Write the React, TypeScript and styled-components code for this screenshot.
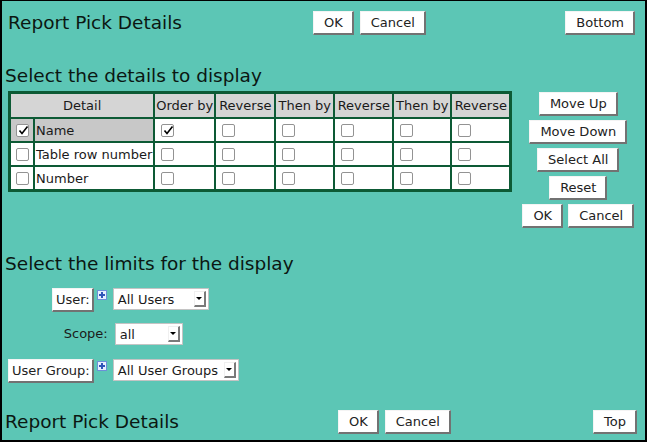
import React from 'react';
import styled, { createGlobalStyle } from 'styled-components';

const GlobalStyle = createGlobalStyle`
  html, body {
    margin: 0;
    padding: 0;
    background: #5cc6b5;
  }
  body {
    font-family: "DejaVu Sans", Verdana, sans-serif;
    color: #000;
  }
`;

const Frame = styled.div`
  box-sizing: border-box;
  width: 647px;
  height: 442px;
  border-style: solid;
  border-color: #000;
  border-width: 1px 2px 2px 2px;
  background: #5cc6b5;
  display: flex;
  flex-direction: column;
  overflow: hidden;
`;

const Bar = styled.div<{ $top?: boolean }>`
  display: flex;
  align-items: center;
  height: 25px;
  margin-top: ${({ $top }) => ($top ? '9px' : 'auto')};
  margin-bottom: ${({ $top }) => ($top ? '0' : '6px')};
  padding-left: ${({ $top }) => ($top ? '6px' : '3px')};
  padding-right: ${({ $top }) => ($top ? '10px' : '8px')};
`;

const Title = styled.div<{ $width: number }>`
  width: ${({ $width }) => $width}px;
  font-size: 18.5px;
  line-height: 22px;
  color: #0b1712;
`;

const Spacer = styled.div`
  flex: 1;
`;

const Button = styled.button<{ $tight?: boolean }>`
  box-sizing: border-box;
  height: 24px;
  margin: 0;
  padding: ${({ $tight }) => ($tight ? '0 2px 0 3px' : '0 9px 0 10px')};
  font-family: "DejaVu Sans", Verdana, sans-serif;
  font-size: 13px;
  color: #222;
  background: #fff;
  border-style: solid;
  border-width: 1px 2px 2px 1px;
  border-color: #f4f4f4 #727272 #727272 #f4f4f4;
  cursor: pointer;
  white-space: nowrap;
`;

const Gap = styled.span<{ $w: number }>`
  display: inline-block;
  width: ${({ $w }) => $w}px;
`;

const Heading = styled.h2<{ $gap: number }>`
  margin: ${({ $gap }) => $gap}px 0 0;
  padding-left: 3px;
  font-size: 18.5px;
  font-weight: normal;
  line-height: 22px;
  color: #0b1712;
`;

const DetailsRow = styled.div`
  display: flex;
  align-items: flex-start;
  padding-left: 6px;
  margin-top: 4px;
`;

const Table = styled.table`
  border-collapse: separate;
  border-spacing: 2px;
  border: 1px solid #0d5a35;
  background: #0d5a35;
  font-size: 13px;
  color: #1a1a1a;
`;

const Th = styled.th<{ $w?: number }>`
  box-sizing: border-box;
  background: #d5d5d5;
  font-weight: normal;
  height: 23px;
  padding: 0 1px;
  min-width: ${({ $w }) => ($w ? `${$w}px` : '0')};
  text-align: center;
  white-space: nowrap;
`;

const Td = styled.td<{ $shade?: boolean; $box?: boolean }>`
  background: ${({ $shade }) => ($shade ? '#c8c8c8' : '#fff')};
  height: 22px;
  padding: 0 1px;
  width: ${({ $box }) => ($box ? '20px' : 'auto')};
  text-align: ${({ $box }) => ($box ? 'center' : 'left')};
  white-space: nowrap;
`;

const Box = styled.span<{ $inset?: boolean }>`
  box-sizing: border-box;
  display: inline-block;
  vertical-align: middle;
  width: 13px;
  height: 13px;
  margin-left: ${({ $inset }) => ($inset ? '5px' : '0')};
  margin-top: -2px;
  border: 1px solid #939393;
  border-radius: 2px;
  background: #fff;
  position: relative;
`;

const Tick = styled.svg`
  position: absolute;
  left: 1px;
  top: 0px;
`;

const SideButtons = styled.div`
  display: flex;
  flex-direction: column;
  align-items: center;
  gap: 4px;
  margin-left: 8px;
  width: 116px;
  padding-top: 1px;
`;

const Pair = styled.div`
  display: flex;
  gap: 5px;
`;

const Limits = styled.div`
  display: grid;
  grid-template-columns: auto auto auto;
  grid-template-rows: 24px 25px 24px;
  justify-content: start;
  align-items: start;
  row-gap: 11px;
  padding-left: 6px;
  margin-top: 13px;
`;

const Label = styled.div<{ $span?: boolean }>`
  grid-column: ${({ $span }) => ($span ? 'span 2' : 'auto')};
  justify-self: end;
  align-self: ${({ $span }) => ($span ? 'start' : 'stretch')};
  line-height: ${({ $span }) => ($span ? '22px' : 'normal')};
  font-size: 13px;
  color: #1a1a1a;
  padding-right: ${({ $span }) => ($span ? '5px' : '0')};
`;

const Plus = styled.span`
  box-sizing: border-box;
  margin: 2px 6px 0 3px;
  width: 10px;
  height: 10px;
  border: 1px solid #6c8fd8;
  background: #e6eeff;
  position: relative;
  &::before,
  &::after {
    content: '';
    position: absolute;
    background: #2f55b8;
  }
  &::before {
    left: 1px;
    top: 3px;
    width: 6px;
    height: 2px;
  }
  &::after {
    left: 3px;
    top: 1px;
    width: 2px;
    height: 6px;
  }
`;

const Select = styled.div<{ $width: number; $shift?: number }>`
  box-sizing: border-box;
  display: flex;
  align-items: center;
  justify-content: space-between;
  width: ${({ $width }) => $width}px;
  height: 22px;
  margin-left: ${({ $shift }) => $shift ?? 0}px;
  padding: 0 2px 0 4px;
  background: #fff;
  border: 1px solid #c4c4c4;
  font-size: 13px;
  color: #1a1a1a;
`;

const Arrow = styled.span`
  box-sizing: border-box;
  width: 12px;
  height: 16px;
  background: #fff;
  border-style: solid;
  border-width: 1px 2px 2px 1px;
  border-color: #f0f0f0 #7a7a7a #7a7a7a #f0f0f0;
  display: flex;
  align-items: center;
  justify-content: center;
  &::after {
    content: '';
    border-left: 3px solid transparent;
    border-right: 3px solid transparent;
    border-top: 3px solid #000;
  }
`;

const Check = ({ checked, inset }: { checked?: boolean; inset?: boolean }) => (
  <Box $inset={inset}>
    {checked && (
      <Tick width="11" height="11" viewBox="0 0 11 11">
        <path d="M1.5 5.5 L4 8.5 L9.5 1.5" fill="none" stroke="#000" strokeWidth="1.6" />
      </Tick>
    )}
  </Box>
);

const rows = [
  { name: 'Name', on: true },
  { name: 'Table row number', on: false },
  { name: 'Number', on: false },
];

// sort columns with their cell widths
const sortCols: [string, number][] = [
  ['Order by', 59],
  ['Reverse', 58],
  ['Then by', 57],
  ['Reverse', 57],
  ['Then by', 56],
  ['Reverse', 57],
];

const App: React.FC = () => {
  return (
    <>
      <GlobalStyle />
      <Frame>
        <Bar $top>
          <Title $width={305}>Report Pick Details</Title>
          <Button>OK</Button>
          <Gap $w={6} />
          <Button>Cancel</Button>
          <Spacer />
          <Button>Bottom</Button>
        </Bar>

        <Heading $gap={30}>Select the details to display</Heading>
        <DetailsRow>
          <Table>
            <thead>
              <tr>
                <Th colSpan={2}>Detail</Th>
                {sortCols.map(([c, w], i) => (
                  <Th key={i} $w={w}>
                    {c}
                  </Th>
                ))}
              </tr>
            </thead>
            <tbody>
              {rows.map((r) => (
                <tr key={r.name}>
                  <Td $box $shade={r.on}>
                    <Check checked={r.on} />
                  </Td>
                  <Td $shade={r.on}>{r.name}</Td>
                  {sortCols.map((_, i) => (
                    <Td key={i}>
                      <Check inset checked={r.on && i === 0} />
                    </Td>
                  ))}
                </tr>
              ))}
            </tbody>
          </Table>
          <SideButtons>
            <Button>Move Up</Button>
            <Button>Move Down</Button>
            <Button>Select All</Button>
            <Button>Reset</Button>
            <Pair>
              <Button>OK</Button>
              <Button>Cancel</Button>
            </Pair>
          </SideButtons>
        </DetailsRow>

        <Heading $gap={25}>Select the limits for the display</Heading>
        <Limits>
          <Label>
            <Button $tight>User:</Button>
          </Label>
          <Plus />
          <Select $width={96}>
            All Users
            <Arrow />
          </Select>

          <Label $span>Scope:</Label>
          <Select $width={68} $shift={2}>
            all
            <Arrow />
          </Select>

          <Label>
            <Button $tight>User Group:</Button>
          </Label>
          <Plus />
          <Select $width={126}>
            All User Groups
            <Arrow />
          </Select>
        </Limits>

        <Bar>
          <Title $width={333}>Report Pick Details</Title>
          <Button>OK</Button>
          <Gap $w={6} />
          <Button>Cancel</Button>
          <Spacer />
          <Button>Top</Button>
        </Bar>
      </Frame>
    </>
  );
};

export default App;
